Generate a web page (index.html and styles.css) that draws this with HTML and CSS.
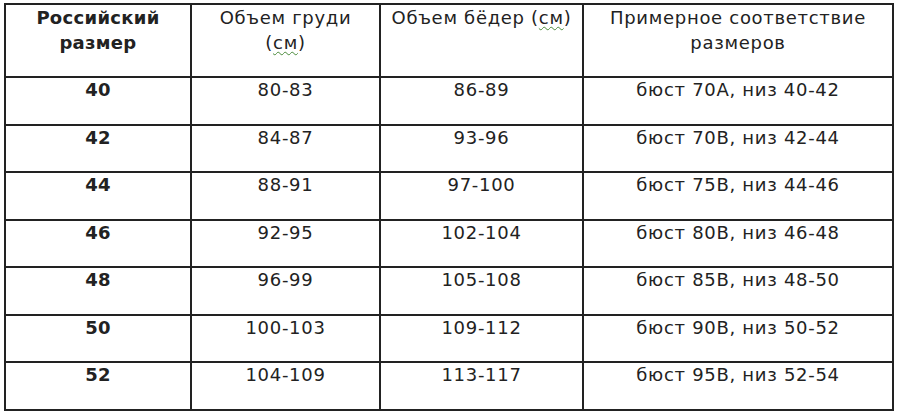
FILE: index.html
```html
<!DOCTYPE html>
<html lang="ru">
<head>
<meta charset="utf-8">
<title>Таблица размеров</title>
<link rel="stylesheet" href="styles.css">
</head>
<body>
<table class="sizes">
  <colgroup>
    <col class="c1"><col class="c2"><col class="c3"><col class="c4">
  </colgroup>
  <thead>
    <tr class="head">
      <th class="b">Российский<br>размер</th>
      <th>Объем груди<br>(<span class="spell">см</span>)</th>
      <th>Объем бёдер (<span class="spell">см</span>)</th>
      <th>Примерное соответствие<br>размеров</th>
    </tr>
  </thead>
  <tbody>
    <tr><td class="b">40</td><td>80-83</td><td>86-89</td><td>бюст 70А, низ 40-42</td></tr>
    <tr><td class="b">42</td><td>84-87</td><td>93-96</td><td>бюст 70В, низ 42-44</td></tr>
    <tr><td class="b">44</td><td>88-91</td><td>97-100</td><td>бюст 75В, низ 44-46</td></tr>
    <tr><td class="b">46</td><td>92-95</td><td>102-104</td><td>бюст 80В, низ 46-48</td></tr>
    <tr><td class="b">48</td><td>96-99</td><td>105-108</td><td>бюст 85В, низ 48-50</td></tr>
    <tr><td class="b">50</td><td>100-103</td><td>109-112</td><td>бюст 90В, низ 50-52</td></tr>
    <tr><td class="b">52</td><td>104-109</td><td>113-117</td><td>бюст 95В, низ 52-54</td></tr>
  </tbody>
</table>
</body>
</html>
```

FILE: styles.css
```css
html, body {
  margin: 0;
  padding: 0;
  background: #fff;
}
body {
  padding: 3px 0 0 4px;
  font-family: "DejaVu Sans", Verdana, sans-serif;
  color: #222;
}
.sizes {
  border-collapse: collapse;
  table-layout: fixed;
  width: 890px;
}
.c1 { width: 186px; }
.c2 { width: 189px; }
.c3 { width: 203px; }
.c4 { width: 310px; }
.sizes th, .sizes td {
  border: 2px solid #222;
  text-align: center;
  vertical-align: top;
  font-size: 18px;
  letter-spacing: 0.7px;
  font-weight: normal;
  padding: 2px 0 0 0;
  line-height: 20px;
}
.sizes th {
  height: 71px;
  line-height: 25px;
  padding-top: 0;
}
.sizes td {
  height: 43.57px;
}
.sizes .b {
  font-weight: bold;
  letter-spacing: 0.3px;
}
.spell {
  text-decoration: underline wavy #4a8a3a;
  text-decoration-thickness: 1px;
  text-underline-offset: 2px;
}
```
